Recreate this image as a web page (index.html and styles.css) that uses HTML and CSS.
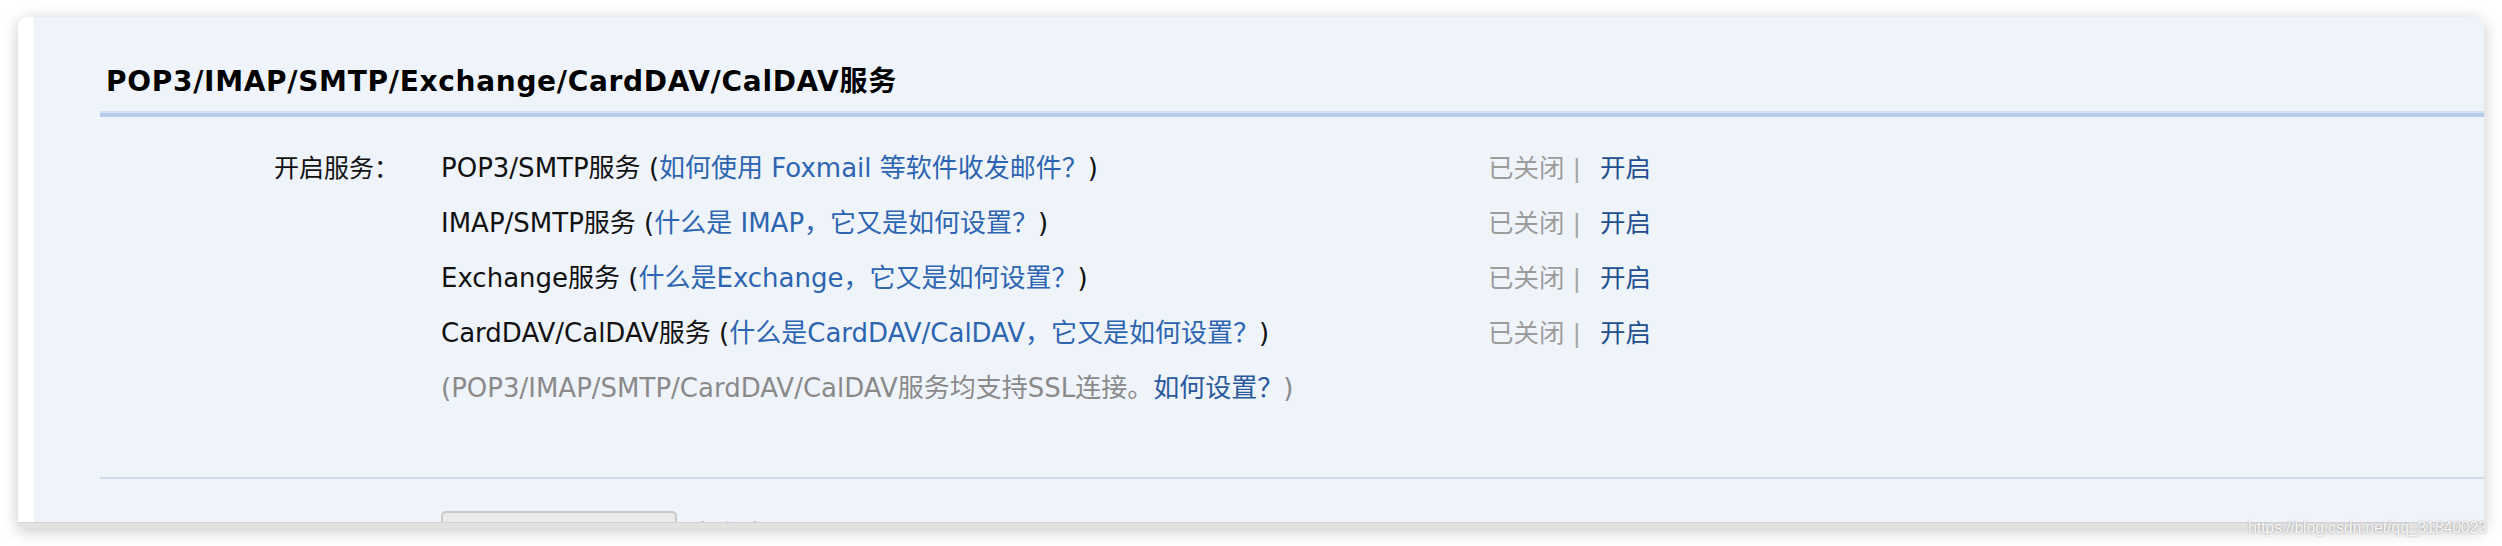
FILE: index.html
```html
<!DOCTYPE html>
<html lang="zh-CN">
<head>
<meta charset="utf-8">
<title>POP3/IMAP/SMTP/Exchange/CardDAV/CalDAV服务</title>
<link rel="stylesheet" href="styles.css">
</head>
<body>
<div class="window">
  <div class="main">
    <div class="strip"></div>
    <div class="content">
      <div class="section">
        <h2 class="title">POP3/IMAP/SMTP/Exchange/CardDAV/CalDAV服务</h2>
        <div class="rule"></div>
        <div class="grid">
          <div class="label">开启服务：</div>
          <div class="svc">POP3/SMTP服务 (<a class="link">如何使用 Foxmail 等软件收发邮件？</a>)</div>
          <div class="status"><span class="off">已关闭</span><span class="bar">|</span><a class="on">开启</a></div>

          <div class="label"></div>
          <div class="svc">IMAP/SMTP服务 (<a class="link">什么是 IMAP，它又是如何设置？</a>)</div>
          <div class="status"><span class="off">已关闭</span><span class="bar">|</span><a class="on">开启</a></div>

          <div class="label"></div>
          <div class="svc">Exchange服务 (<a class="link">什么是Exchange，它又是如何设置？</a>)</div>
          <div class="status"><span class="off">已关闭</span><span class="bar">|</span><a class="on">开启</a></div>

          <div class="label"></div>
          <div class="svc">CardDAV/CalDAV服务 (<a class="link">什么是CardDAV/CalDAV，它又是如何设置？</a>)</div>
          <div class="status"><span class="off">已关闭</span><span class="bar">|</span><a class="on">开启</a></div>

          <div class="label"></div>
          <div class="hint">(POP3/IMAP/SMTP/CardDAV/CalDAV服务均支持SSL连接。<a class="link dark">如何设置？</a>)</div>
        </div>
        <div class="sep"></div>
        <div class="actions">
          <div class="btn"><span class="tick"></span></div>
          <div class="note">未生成</div>
        </div>
      </div>
    </div>
  </div>
  <div class="bottombar"></div>
</div>
<div class="watermark">https://blog.csdn.net/qq_31840023</div>
</body>
</html>
```
FILE: styles.css
```css
html, body {
  margin: 0;
  padding: 0;
}
body {
  width: 2502px;
  height: 546px;
  overflow: hidden;
  background: #ffffff;
  font-family: "DejaVu Sans", "Noto Sans CJK SC", sans-serif;
  position: relative;
}
.window {
  margin: 17px 0 0 18px;
  width: 2466px;
  height: 511px;
  border-radius: 9px 9px 4px 4px;
  overflow: hidden;
  background: #ffffff;
  box-shadow: 0 3px 16px rgba(0, 0, 0, 0.22);
  display: flex;
  flex-direction: column;
}
.main {
  display: flex;
  height: 505px;
}
.strip {
  width: 16px;
  background: #ffffff;
}
.content {
  flex: 1;
  background: #eff4fb;
  overflow: hidden;
}
.bottombar {
  height: 5px;
  background: #e2e2e2;
  border-top: 1px solid #d4d4d4;
}
.section {
  margin-left: 66px;
}
.title {
  margin: 0 0 8px 0;
  padding: 44px 0 0 6px;
  height: 42px;
  line-height: 42px;
  font-size: 28px;
  font-weight: bold;
  letter-spacing: 0.7px;
  color: #000000;
}
.rule {
  height: 4px;
  border-top: 2px solid #d6e3f4;
  background: #b5cbe8;
}
.grid {
  padding-top: 24px;
  margin-left: 174px;
  display: grid;
  grid-template-columns: 167px 1047px auto;
  line-height: 55px;
  font-size: 26px;
  color: #111111;
  white-space: nowrap;
}
.label {
  font-size: 25px;
}
.status {
  font-size: 25.5px;
}
.hint {
  grid-column: 2 / 4;
  color: #8a8a8a;
}
.link {
  color: #2d65b0;
}
.link.dark {
  color: #2a5a9d;
}
.off {
  color: #9c9c9c;
}
.bar {
  color: #a8a8a8;
  margin: 0 19px 0 8px;
}
.on {
  color: #214f8f;
}
.sep {
  margin-top: 61px;
  height: 2px;
  background: #cfdbe9;
}
.actions {
  margin-left: 341px;
  padding-top: 32px;
  display: flex;
  align-items: flex-start;
}
.btn {
  position: relative;
  width: 232px;
  height: 40px;
  border: 2px solid #c9c9c9;
  border-radius: 5px;
  background: #ebebeb;
}
.tick {
  position: absolute;
  left: 186px;
  top: 9px;
  width: 2px;
  height: 4px;
  background: #9a9a9a;
}
.note {
  margin: 4px 0 0 13px;
  line-height: 40px;
  font-size: 25px;
  color: #8a8a8a;
}
.watermark {
  position: absolute;
  left: 2248px;
  top: 519px;
  font-family: "Liberation Sans", sans-serif;
  font-size: 16px;
  color: rgba(255, 255, 255, 0.92);
  text-shadow: 0 0 2px rgba(0, 0, 0, 0.35);
  letter-spacing: -0.2px;
}
```
